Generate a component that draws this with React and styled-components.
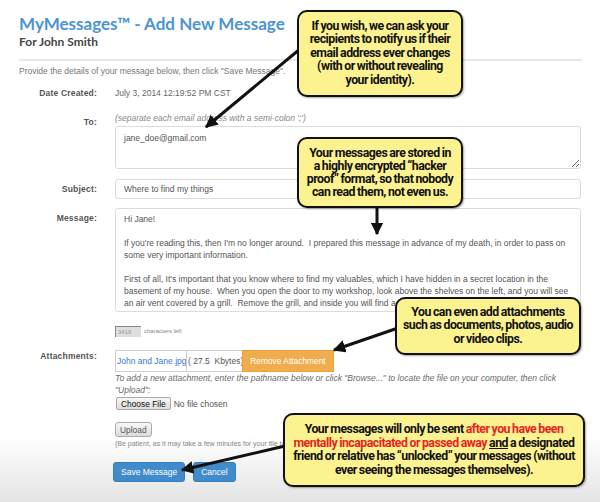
import React from "react";
import styled, { createGlobalStyle } from "styled-components";

const Global = createGlobalStyle`
  html, body { margin: 0; padding: 0; }
  body { width: 600px; height: 502px; overflow: hidden; background: #fff; }
`;

const Screen = styled.div`
  position: relative;
  width: 600px;
  height: 502px;
  overflow: hidden;
  background: linear-gradient(#fff 0, #fff 436px, #e4e4e4 502px);
  font-family: "Liberation Sans", Arial, sans-serif;
`;

const Page = styled.div`
  padding: 14px 19px 0 19px;
`;

const Title = styled.h1`
  margin: 0;
  font: 700 17px/20px Lato, "Open Sans", sans-serif;
  color: #4b94d5;
`;

const Subtitle = styled.h2`
  margin: 1px 0 0;
  font: 700 12px/14px Lato, "Open Sans", sans-serif;
  color: #454545;
`;

const Rule = styled.div`
  margin-top: 10px;
  width: 563px;
  height: 2px;
  background: #e8e8e8;
`;

const Intro = styled.p`
  margin: 5px 0 0;
  font-size: 8.5px;
  line-height: 11px;
  color: #777;
`;

const Row = styled.div`
  display: grid;
  grid-template-columns: 78px 466px;
  column-gap: 18px;
  align-items: ${(p) => (p.$center ? "center" : "start")};
  margin-top: ${(p) => p.$mt || 0}px;
`;

const Label = styled.div`
  text-align: right;
  font-size: 8.5px;
  line-height: 11px;
  font-weight: 700;
  letter-spacing: 0.2px;
  color: #555;
  padding-top: ${(p) => p.$pt || 0}px;
`;

const Value = styled.div`
  font-size: 8.5px;
  line-height: 11px;
  color: #666;
`;

const Hint = styled.div`
  font-size: 8.5px;
  line-height: ${(p) => p.$lh || 11}px;
  font-style: italic;
  color: ${(p) => p.$color || "#888"};
`;

const Area = styled.textarea`
  display: block;
  box-sizing: border-box;
  width: 466px;
  height: ${(p) => p.$h}px;
  margin-top: ${(p) => p.$mt || 0}px;
  padding: ${(p) => p.$pt || 4}px 8px 0;
  border: 1px solid #dcdcdc;
  border-radius: 3px;
  font-family: "Liberation Sans", Arial, sans-serif;
  font-size: 8.5px;
  line-height: 12px;
  color: #555;
  background: #fff;
  resize: ${(p) => (p.$resize ? "vertical" : "none")};
  overflow: hidden;
  white-space: pre;
  outline: none;
`;

const Input = styled.input`
  display: block;
  box-sizing: border-box;
  width: 466px;
  height: 20px;
  padding: 0 8px;
  border: 1px solid #dcdcdc;
  border-radius: 3px;
  font-family: "Liberation Sans", Arial, sans-serif;
  font-size: 8.5px;
  color: #555;
  outline: none;
`;

const Counter = styled.div`
  display: flex;
  align-items: center;
  gap: 3px;
  margin: 14px 0 0 96px;
`;

const CountBox = styled.div`
  box-sizing: border-box;
  width: 26px;
  height: 11px;
  background: #dedede;
  border-top: 1px solid #888;
  border-left: 1px solid #888;
  font-size: 6px;
  line-height: 10px;
  color: #999;
  padding-left: 2px;
`;

const Tiny = styled.div`
  font-size: ${(p) => p.$size || 6}px;
  line-height: ${(p) => p.$lh || 9}px;
  margin-top: ${(p) => p.$mt || 0}px;
  color: #888;
  white-space: nowrap;
`;

const AttachBar = styled.div`
  display: flex;
  height: 22px;
`;

const AttachCell = styled.div`
  box-sizing: border-box;
  display: flex;
  align-items: center;
  width: ${(p) => p.$w}px;
  padding-left: 1px;
  border: 1px solid #cfcfcf;
  border-right: none;
  background: #fff;
  font-size: 8.5px;
  white-space: pre;
  color: ${(p) => p.$color || "#555"};
`;

const OrangeButton = styled.button`
  box-sizing: border-box;
  width: 92px;
  height: 22px;
  padding: 0;
  border: 1px solid #eea236;
  background: #f0ad4e;
  color: #fff;
  font-family: "Liberation Sans", Arial, sans-serif;
  font-size: 8.4px;
`;

const FileRow = styled.div`
  display: flex;
  align-items: center;
  gap: 3px;
  margin-top: 1px;
  font-size: 8.5px;
  color: #555;
`;

const GreyButton = styled.button`
  display: block;
  box-sizing: border-box;
  height: ${(p) => p.$h}px;
  padding: 0 ${(p) => p.$px}px;
  border: 1px solid #a9a9a9;
  border-radius: ${(p) => p.$r || 2}px;
  background: linear-gradient(#f8f8f8, #dcdcdc);
  font-family: "Liberation Sans", Arial, sans-serif;
  font-size: 8.4px;
  color: ${(p) => p.$color || "#111"};
  margin: ${(p) => p.$mt || 0}px 0 0 ${(p) => p.$ml || 0}px;
`;

const Buttons = styled.div`
  display: flex;
  gap: 8px;
  margin: 14px 0 0 -2px;
`;

const BlueButton = styled.button`
  box-sizing: border-box;
  height: 20px;
  padding: 0 ${(p) => p.$px}px;
  border: 1px solid #357ebd;
  border-radius: 3px;
  background: #428bca;
  color: #fff;
  font-family: "Liberation Sans", Arial, sans-serif;
  font-size: 8.5px;
`;

const Callout = styled.div`
  position: absolute;
  left: ${(p) => p.$x}px;
  top: ${(p) => p.$y}px;
  width: ${(p) => p.$w}px;
  height: ${(p) => p.$h}px;
  box-sizing: border-box;
  display: flex;
  align-items: center;
  justify-content: center;
  text-align: center;
  white-space: nowrap;
  background: #fdf290;
  border: 2.5px solid #111;
  border-radius: 10px;
  box-shadow: 1px 1px 2px rgba(0, 0, 0, 0.35);
  font-family: Roboto, "Liberation Sans", sans-serif;
  font-weight: 700;
  font-size: 12.3px;
  letter-spacing: -0.5px;
  word-spacing: -0.5px;
  line-height: ${(p) => p.$lh || 13.5}px;
  color: #111;
`;

const Red = styled.span`
  color: #e8231f;
`;

const Under = styled.span`
  text-decoration: underline;
`;

const Arrows = styled.svg`
  position: absolute;
  left: 0;
  top: 0;
  pointer-events: none;
`;

const messageText = [
  "Hi Jane!",
  "",
  "If you're reading this, then I'm no longer around.  I prepared this message in advance of my death, in order to pass on",
  "some very important information.",
  "",
  "First of all, It's important that you know where to find my valuables, which I have hidden in a secret location in the",
  "basement of my house.  When you open the door to my workshop, look above the shelves on the left, and you will see",
  "an air vent covered by a grill.  Remove the grill, and inside you will find a small box.",
].join("\n");

export default function App() {
  return (
    <Screen>
      <Global />
      <Page>
        <Title>MyMessages™ - Add New Message</Title>
        <Subtitle>For John Smith</Subtitle>
        <Rule />
        <Intro>Provide the details of your message below, then click "Save Message".</Intro>

        <Row $mt={11}>
          <Label>Date Created:</Label>
          <Value>July 3, 2014 12:19:52 PM CST</Value>
        </Row>

        <Row $mt={14}>
          <Label $pt={4}>To:</Label>
          <div>
            <Hint>(separate each email address with a semi-colon ';')</Hint>
            <Area $h={43} $mt={2} $pt={5} $resize readOnly wrap="off" value="jane_doe@gmail.com" />
          </div>
        </Row>

        <Row $mt={10} $center>
          <Label>Subject:</Label>
          <Input readOnly value="Where to find my things" />
        </Row>

        <Row $mt={9}>
          <Label $pt={5}>Message:</Label>
          <Area $h={104} $pt={4} readOnly wrap="off" value={messageText} />
        </Row>

        <Counter>
          <CountBox>3418</CountBox>
          <Tiny>characters left</Tiny>
        </Counter>

        <Row $mt={13}>
          <Label $pt={1}>Attachments:</Label>
          <div>
            <AttachBar>
              <AttachCell $w={71} $color="#3a7bc8">John and Jane.jpg</AttachCell>
              <AttachCell $w={56}>( 27.5  Kbytes)</AttachCell>
              <OrangeButton>Remove Attachment</OrangeButton>
            </AttachBar>
            <Hint $lh={12} $color="#6a6a6a">
              To add a new attachment, enter the pathname below or click "Browse..." to locate the file on your computer, then click
              <br />
              "Upload":
            </Hint>
            <FileRow>
              <GreyButton $h={13} $px={4} $ml={1}>Choose File</GreyButton>
              <span>No file chosen</span>
            </FileRow>
            <GreyButton $h={15} $px={4} $r={3} $mt={12} $color="#555">
              Upload
            </GreyButton>
            <Tiny $size={7} $mt={2}>(Be patient, as it may take a few minutes for your file to upload.)</Tiny>
            <Buttons>
              <BlueButton $px={7}>Save Message</BlueButton>
              <BlueButton $px={7}>Cancel</BlueButton>
            </Buttons>
          </div>
        </Row>
      </Page>

      <Arrows width="600" height="502" viewBox="0 0 600 502">
        <defs>
          <marker id="head" viewBox="0 0 10 10" refX="9" refY="5" markerWidth="4.2" markerHeight="4.2" orient="auto">
            <path d="M0 0 L10 5 L0 10 Z" fill="#111" />
          </marker>
        </defs>
        <g stroke="#111" strokeWidth="3" fill="none" markerEnd="url(#head)">
          <line x1="300" y1="49" x2="206" y2="127" />
          <line x1="377" y1="207" x2="377" y2="234" />
          <line x1="398" y1="328" x2="334" y2="350" />
          <line x1="285" y1="446" x2="182" y2="470" />
        </g>
      </Arrows>

      <Callout $x={297} $y={10} $w={166} $h={87}>
        <div>
          If you wish, we can ask your
          <br />
          recipients to notify us if their
          <br />
          email address ever changes
          <br />
          (with or without revealing
          <br />
          your identity).
        </div>
      </Callout>

      <Callout $x={297} $y={137} $w={166} $h={71} $lh={13}>
        <div>
          Your messages are stored in
          <br />
          a highly encrypted “hacker
          <br />
          proof” format, so that nobody
          <br />
          can read them, not even us.
        </div>
      </Callout>

      <Callout $x={395} $y={297} $w={186} $h={58}>
        <div>
          You can even add attachments
          <br />
          such as documents, photos, audio
          <br />
          or video clips.
        </div>
      </Callout>

      <Callout $x={283} $y={413} $w={302} $h={74} $lh={13.5}>
        <div>
          Your messages will only be sent <Red>after you have been</Red>
          <br />
          <Red>mentally incapacitated or passed away</Red> <Under>and</Under> a designated
          <br />
          friend or relative has “unlocked” your messages (without
          <br />
          ever seeing the messages themselves).
        </div>
      </Callout>
    </Screen>
  );
}
